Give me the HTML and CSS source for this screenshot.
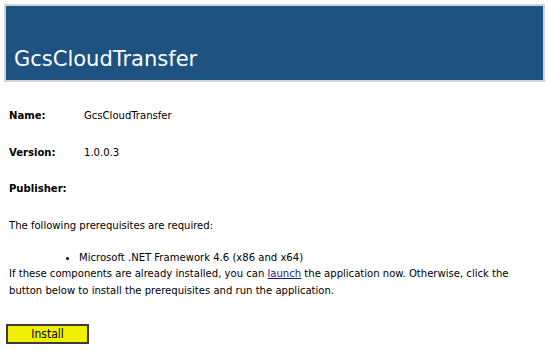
FILE: index.html
```html
<!DOCTYPE html>
<html>
<head>
<meta charset="utf-8">
<link rel="stylesheet" href="styles.css">
</head>
<body>
<div class="header"><h1 class="title">GcsCloudTransfer</h1></div>
<div class="info">
  <div class="label">Name:</div><div class="value">GcsCloudTransfer</div>
  <div class="label">Version:</div><div class="value">1.0.0.3</div>
  <div class="label">Publisher:</div><div class="value"></div>
</div>
<p class="req">The following prerequisites are required:</p>
<ul class="prereq"><li>Microsoft .NET Framework 4.6 (x86 and x64)</li></ul>
<p class="note">If these components are already installed, you can <a href="#" class="link">launch</a> the application now. Otherwise, click the button below to install the prerequisites and run the application.</p>
<div class="actions"><button class="install">Install</button></div>
</body>
</html>
```
FILE: styles.css
```css
html, body { margin: 0; padding: 0; background: #fff; }
body { font-family: "DejaVu Sans Condensed", "DejaVu Sans", sans-serif; font-size: 11.2px; color: #000; }
.header {
  margin: 4px 3px 0 4px;
  border: 2px solid #d3d3d3;
  background: #1d5281;
  height: 74px;
  display: flex;
  align-items: flex-end;
}
.title {
  margin: 0 0 9px 8px;
  font-family: "DejaVu Sans", sans-serif;
  font-weight: normal;
  font-size: 21px;
  color: #fff;
  line-height: 24px;
}
.info {
  display: grid;
  grid-template-columns: 75px 1fr;
  grid-auto-rows: 36.5px;
  margin: 27px 0 0 9px;
  line-height: 14px;
}
.label { font-weight: bold; }
.req { margin: 0 0 0 9px; line-height: 14px; }
.prereq { margin: 18px 0 0 0; padding-left: 79px; line-height: 14px; }
.note { margin: 0 10px 0 9px; line-height: 17px; }
.link { color: #1a1a8c; }
.actions { margin: 25px 0 0 6px; }
.install {
  font-family: "DejaVu Sans Condensed", "DejaVu Sans", sans-serif;
  font-size: 12px;
  width: 83px;
  height: 20px;
  background: #f0f000;
  border: 2px solid #3c3c3c;
  padding: 0;
  color: #000;
}
```
